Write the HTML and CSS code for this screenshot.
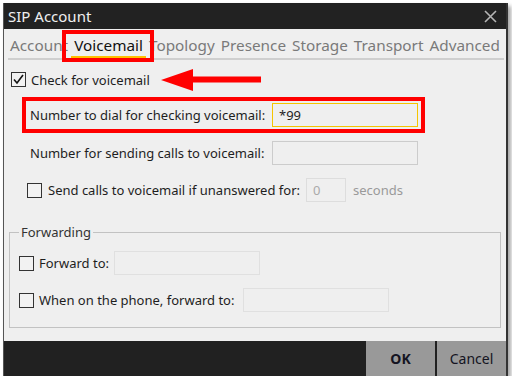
FILE: index.html
```html
<!DOCTYPE html>
<html>
<head>
<meta charset="utf-8">
<link rel="stylesheet" href="styles.css">
</head>
<body>
<div class="window">
  <div class="titlebar">
    <span class="title">SIP Account</span>
    <svg class="close" width="13" height="13" viewBox="0 0 13 13"><path d="M1 1L12 12M12 1L1 12" stroke="#b5b5b5" stroke-width="1.6" fill="none"/></svg>
  </div>
  <div class="tabs">
    <span class="tab">Account</span>
    <span class="tab active">Voicemail</span>
    <span class="tab">Topology</span>
    <span class="tab">Presence</span>
    <span class="tab">Storage</span>
    <span class="tab">Transport</span>
    <span class="tab">Advanced</span>
  </div>
  <div class="content">
    <div class="row check-row">
      <span class="cb checked"><svg width="13" height="13" viewBox="0 0 13 13"><path d="M2 6.5L5 10L11 2" stroke="#111" stroke-width="1.6" fill="none"/></svg></span>
      <span class="label">Check for voicemail</span>
      <svg class="arrow" width="100" height="24" viewBox="0 0 100 24"><path d="M0 12L32 1L32 8.5L100 8.5L100 14.5L32 14.5L32 23Z" fill="#ff0000"/></svg>
    </div>
    <div class="field-row highlight">
      <span class="label">Number to dial for checking voicemail:</span>
      <span class="input focus">*99</span>
    </div>
    <div class="field-row second">
      <span class="label">Number for sending calls to voicemail:</span>
      <span class="input"></span>
    </div>
    <div class="row send-row">
      <span class="cb"></span>
      <span class="label">Send calls to voicemail if unanswered for:</span>
      <span class="input small disabled">0</span>
      <span class="label muted">seconds</span>
    </div>
    <fieldset class="forwarding">
      <legend>Forwarding</legend>
      <div class="row fwd-row">
        <span class="cb"></span>
        <span class="label">Forward to:</span>
        <span class="input faint"></span>
      </div>
      <div class="row fwd-row">
        <span class="cb"></span>
        <span class="label wide">When on the phone, forward to:</span>
        <span class="input faint"></span>
      </div>
    </fieldset>
  </div>
  <div class="buttonbar">
    <span class="btn ok">OK</span>
    <span class="btn cancel">Cancel</span>
  </div>
</div>
</body>
</html>
```
FILE: styles.css
```css
html, body {
  margin: 0;
  padding: 0;
  background: #ffffff;
}
body {
  font-family: "Noto Sans", "Open Sans", sans-serif;
  color: #1e1e1e;
}
.window {
  margin: 3px 0 0 3px;
  width: 505px;
  height: 373px;
  box-sizing: border-box;
  border-left: 1px solid #555;
  border-right: 2px solid #333;
  background: #efefef;
  display: flex;
  flex-direction: column;
  box-shadow: 3px 3px 4px rgba(0,0,0,0.35);
}
.titlebar {
  height: 26px;
  flex: none;
  background: #222222;
  color: #f0f0f0;
  display: flex;
  align-items: center;
  justify-content: space-between;
  padding: 0 9px 0 4px;
}
.title {
  font-size: 15px;
  line-height: 26px;
}
.close {
  display: block;
}
.tabs {
  flex: none;
  height: 29px;
  margin: 0 2px 0 4px;
  border-bottom: 2px solid #cfcfcf;
  display: flex;
  align-items: flex-end;
  gap: 6px;
  padding-left: 2px;
}
.tab {
  font-size: 15.3px;
  color: #7a7a7a;
  line-height: 22px;
  padding-bottom: 2px;
  white-space: nowrap;
}
.tab.active {
  color: #111;
  position: relative;
  padding: 0 7px 2px 8px;
  margin: 0 -7px 0 -8px;
  background: linear-gradient(#ffc000, #ffc000) no-repeat;
  background-size: calc(100% - 9px) 2px;
  background-position: 5px 100%;
  outline: 4px solid #ff0000;
  outline-offset: 0;
}
.content {
  flex: 1;
  padding: 12px 0 0 7px;
  font-size: 13px;
}
.row {
  display: flex;
  align-items: center;
}
.cb {
  width: 13px;
  height: 13px;
  border: 1px solid #333;
  background: #f2f2f2;
  flex: none;
  display: flex;
  align-items: center;
  justify-content: center;
}
.label {
  white-space: nowrap;
}
.check-row {
  height: 15px;
  padding-left: 0;
  gap: 5px;
}
.arrow {
  margin-left: 6px;
}
.field-row {
  display: flex;
  align-items: center;
  justify-content: space-between;
  margin-left: 15px;
  width: 388px;
  padding: 0 3px 0 4px;
  height: 28px;
}
.field-row.highlight {
  margin-top: 14px;
  outline: 4px solid #ff0000;
  outline-offset: 0;
}
.field-row.second {
  margin-top: 10px;
}
.input {
  box-sizing: border-box;
  width: 146px;
  height: 24px;
  border: 1px solid #cccccc;
  background: #efefef;
  line-height: 22px;
  padding-left: 6px;
  flex: none;
}
.input.focus {
  border-color: #f5c400;
}
.send-row {
  margin-top: 11px;
  padding-left: 16px;
  height: 24px;
  gap: 6px;
}
.input.small {
  width: 40px;
}
.input.disabled {
  border-color: #dddddd;
  color: #aaaaaa;
}
.muted {
  color: #9a9a9a;
  margin-left: 1px;
}
.forwarding {
  margin: 21px 0 0 -2px;
  width: 492px;
  height: 105px;
  box-sizing: border-box;
  border: 1px solid #c2c2c2;
  padding: 10px 0 0 9px;
}
.forwarding legend {
  padding: 0 2px;
  margin-left: 0;
  color: #333;
  font-size: 13px;
  line-height: 18px;
}
.fwd-row {
  gap: 5px;
  height: 24px;
}
.fwd-row + .fwd-row {
  margin-top: 13px;
}
.label.wide {
  margin-right: 4px;
}
.input.faint {
  border-color: #e0e0e0;
}
.buttonbar {
  flex: none;
  height: 35px;
  background: #212121;
  display: flex;
  justify-content: flex-end;
  gap: 2px;
}
.btn {
  width: 69px;
  background: #999999;
  color: #141422;
  font-size: 14px;
  display: flex;
  align-items: center;
  justify-content: center;
}
.btn.ok {
  font-weight: bold;
}
```
